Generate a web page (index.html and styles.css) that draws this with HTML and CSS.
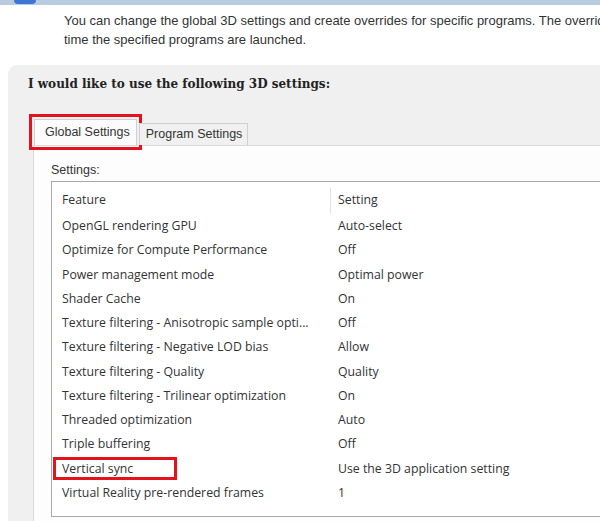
FILE: index.html
```html
<!DOCTYPE html>
<html lang="en">
<head>
  <meta charset="UTF-8">
  <title>Manage 3D settings</title>
  <link rel="stylesheet" href="styles.css">
</head>
<body>
  <div class="topbar"><span class="topicon"></span></div>

  <p class="intro">
    You can change the global 3D settings and create overrides for specific programs. The overrid<br>
    time the specified programs are launched.
  </p>

  <div class="panel">
    <h2>I would like to use the following 3D settings:</h2>

    <div class="tabs">
      <div class="tab active">Global Settings</div>
      <div class="tab">Program Settings</div>
    </div>

    <div class="tab-body">
      <div class="label">Settings:</div>
      <div class="list">
        <div class="list-head">
          <div class="col">Feature</div>
          <div class="col sep">Setting</div>
        </div>
        <div class="row"><span>OpenGL rendering GPU</span><span>Auto-select</span></div>
        <div class="row"><span>Optimize for Compute Performance</span><span>Off</span></div>
        <div class="row"><span>Power management mode</span><span>Optimal power</span></div>
        <div class="row"><span>Shader Cache</span><span>On</span></div>
        <div class="row"><span>Texture filtering - Anisotropic sample opti...</span><span>Off</span></div>
        <div class="row"><span>Texture filtering - Negative LOD bias</span><span>Allow</span></div>
        <div class="row"><span>Texture filtering - Quality</span><span>Quality</span></div>
        <div class="row"><span>Texture filtering - Trilinear optimization</span><span>On</span></div>
        <div class="row"><span>Threaded optimization</span><span>Auto</span></div>
        <div class="row"><span>Triple buffering</span><span>Off</span></div>
        <div class="row"><span><span class="mark">Vertical sync</span></span><span>Use the 3D application setting</span></div>
        <div class="row"><span>Virtual Reality pre-rendered frames</span><span>1</span></div>
      </div>
    </div>
  </div>
</body>
</html>
```

FILE: styles.css
```css
body { margin: 0; background: #fff; font-family: "Liberation Sans", Arial, sans-serif; color: #2b2b2b; overflow: hidden; height: 521px; }

.topbar { height: 5px; background: #b9cbe1; display: flex; }
.topicon { width: 22px; height: 4px; margin-left: 14px; background: #3b76d6; border-radius: 0 0 6px 6px; }

.intro { margin: 6px 0 0 64px; font-size: 13px; line-height: 19px; white-space: nowrap; color: #333; }

.panel { margin: 16px 0 0 8px; background: #f0f0f0; border-top-left-radius: 9px; padding: 12px 0 0 20px; height: 444px; }
.panel h2 { margin: 0; font-family: "DejaVu Serif", serif; font-size: 12px; font-weight: bold; color: #222; }

.tabs { display: flex; align-items: flex-end; margin: 28px 0 0 6px; height: 26px; }
.tab { font-size: 12.5px; padding: 0 5px 0 6px; height: 21px; line-height: 21px; border: 1px solid #d0d0d0; border-bottom: none; background: #f0f0f0; color: #333; }
.tab.active { height: 25px; line-height: 25px; padding: 0 6px 0 10px; background: #fbfbfb; outline: 3px solid #e3121d; outline-offset: 2px; margin-right: 2px; }

.tab-body { margin-left: 5px; background: #fdfdfd; border-left: 1px solid #dadada; border-top: 1px solid #dadada; padding: 16px 0 0 17px; height: 380px; }
.label { font-size: 12.5px; line-height: 16px; color: #333; }

.list { margin-top: 3px; border: 1px solid #a9a9a9; border-right: none; background: #fff; padding-bottom: 11px; font-family: "Open Sans", sans-serif; font-size: 12.3px; color: #333; }
.list-head { display: grid; grid-template-columns: 278px 1fr; height: 26px; margin-top: 6px; }
.list-head .col { padding-left: 10px; line-height: 24px; }
.list-head .sep { border-left: 1px solid #e2e2e2; padding-left: 7px; }
.row { display: grid; grid-template-columns: 276px 1fr; height: 24.27px; line-height: 24px; padding-left: 10px; }

.mark { display: inline-block; line-height: 17px; padding: 0 41px 0 6px; margin-left: -6px; outline: 3px solid #e3121d; }
```
